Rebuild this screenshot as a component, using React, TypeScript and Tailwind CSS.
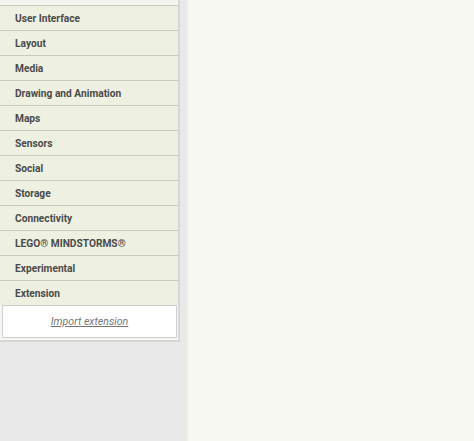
const categories = [
  "User Interface",
  "Layout",
  "Media",
  "Drawing and Animation",
  "Maps",
  "Sensors",
  "Social",
  "Storage",
  "Connectivity",
  "LEGO® MINDSTORMS®",
  "Experimental",
  "Extension",
];

export default function App() {
  return (
    <div className="flex h-[441px] w-[474px] overflow-hidden font-['Roboto',sans-serif]">
      <div className="w-[187px] shrink-0 bg-[#e9e9e9]">
        <div className="w-[180px] border-r-2 border-b-2 border-[#d6d6d6] bg-[#f7f7f2]">
          <div className="h-[5px] bg-[#f4f5ee]" />
          {categories.map((c) => (
            <div
              key={c}
              className="flex h-[25px] w-[178px] items-center border-t border-[#c9ccc0] bg-[#eef1e1] pl-[15px] pt-[2px] text-[10.2px] font-bold text-[#4a4a4a]"
            >
              {c}
            </div>
          ))}
          <div className="m-[2px] mt-0 flex h-[33px] w-[175px] items-center justify-center border border-[#cfcfcf] bg-white">
            <a className="text-[10.6px] italic text-[#777] underline">Import extension</a>
          </div>
        </div>
      </div>
      <div className="flex-1 border-l border-[#eeeeea] bg-[#f8f8f3]" />
    </div>
  );
}
